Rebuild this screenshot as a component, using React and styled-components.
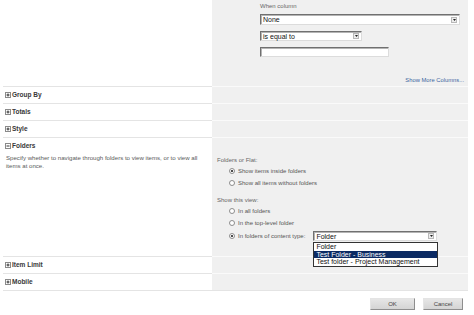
import React from 'react';
import styled, { createGlobalStyle } from 'styled-components';

const Global = createGlobalStyle`
  html, body { margin: 0; padding: 0; background: #fff; }
  body { font-family: "Liberation Sans", Arial, sans-serif; }
  * { box-sizing: border-box; }
`;

const Page = styled.div`
  width: 474px;
  height: 315px;
  overflow: hidden;
  padding: 0 6px 0 3px;
`;

const Table = styled.div`
  display: flex;
  flex-direction: column;
  border-bottom: 1px solid #e4e4e4;
`;

const Row = styled.div`
  display: grid;
  grid-template-columns: 209px 256px;
  height: ${p => p.$h}px;
`;

const LeftCell = styled.div`
  border-top: ${p => (p.$first ? 'none' : '1px solid #e4e4e4')};
  padding: 3px 4px 0 2px;
  display: flex;
  flex-direction: column;
`;

const RightCell = styled.div`
  background: #f0f0f0;
  border-top: ${p => (p.$first ? 'none' : '1px solid #fafafa')};
  display: flex;
  flex-direction: column;
  padding: ${p => p.$pad || '0'};
`;

const Header = styled.div`
  display: flex;
  align-items: center;
  gap: 1px;
  height: 9px;
  font-size: 6.5px;
  font-weight: bold;
  color: #383838;
  white-space: nowrap;
`;

const Desc = styled.div`
  margin-top: 4px;
  padding-left: 1px;
  font-size: 6.1px;
  line-height: 8px;
  color: #5a5a5a;
`;

const Label = styled.div`
  font-size: 6px;
  line-height: 9px;
  height: 9px;
  color: #666;
  white-space: nowrap;
`;

const MoreLink = styled.a`
  margin-top: auto;
  align-self: flex-end;
  font-size: 5.8px;
  line-height: 8px;
  color: #3b66a0;
  text-decoration: none;
  white-space: nowrap;
`;

const SelectWrap = styled.div`
  position: relative;
  margin-top: ${p => p.$mt || 0}px;
  margin-left: ${p => p.$ml || 0}px;
  width: ${p => p.$w}px;
  flex: none;
`;

const SelectBox = styled.div`
  width: 100%;
  height: ${p => p.$h || 11}px;
  background: #fff;
  border: 1px solid;
  border-color: #707070 #dcdcdc #dcdcdc #707070;
  box-shadow: inset 1px 1px 0 #b4b4b4;
  display: flex;
  align-items: center;
  justify-content: space-between;
  padding: 0 2px 0 2px;
  font-size: 7px;
  color: #111;
  white-space: nowrap;
`;

const DropBtn = styled.span`
  width: 6px;
  height: 6px;
  background: #ececec;
  border: 1px solid #b8b8b8;
  display: flex;
  align-items: center;
  justify-content: center;
`;

const TextInput = styled.div`
  margin-top: 6px;
  width: 129px;
  height: 10px;
  background: #fff;
  border: 1px solid;
  border-color: #707070 #dcdcdc #dcdcdc #707070;
  box-shadow: inset 1px 1px 0 #b4b4b4;
`;

const Popup = styled.div`
  position: absolute;
  top: calc(100% + 1px);
  left: 0;
  width: 125px;
  background: #fff;
  border: 1px solid #333;
  display: flex;
  flex-direction: column;
  z-index: 5;
`;

const PopItem = styled.div`
  height: 7.5px;
  line-height: 7.5px;
  padding-left: 2px;
  font-size: 7px;
  white-space: nowrap;
  background: ${p => (p.$active ? '#0b2a63' : '#fff')};
  color: ${p => (p.$active ? '#fff' : '#111')};
`;

const Group = styled.div`
  display: flex;
  flex-direction: column;
  margin-top: ${p => p.$mt || 0}px;
`;

const Option = styled.div`
  display: flex;
  align-items: center;
  gap: 3px;
  height: ${p => p.$h || 12}px;
  margin-left: 12px;
  font-size: 6px;
  color: #555;
  white-space: nowrap;
`;

const Buttons = styled.div`
  display: flex;
  justify-content: flex-end;
  gap: 8px;
  padding: 7px 5px 0 0;
`;

const Button = styled.button`
  width: ${p => p.$w}px;
  height: 12px;
  padding: 0;
  font-family: "Liberation Sans", Arial, sans-serif;
  font-size: 6px;
  color: #444;
  background: linear-gradient(#e6e6e6, #d4d4d4);
  border: 1px solid;
  border-color: #e4e4e4 #8e8e8e #8e8e8e #e4e4e4;
`;

const Arrow = () => (
  <svg width="3" height="2" viewBox="0 0 3 2">
    <path d="M0 0 H3 L1.5 2 Z" fill="#222" />
  </svg>
);

const Expander = ({ open }) => (
  <svg width="6" height="6" viewBox="0 0 6 6" style={{ flex: 'none' }}>
    <rect x="0.5" y="0.5" width="5" height="5" fill="#fff" stroke="#8a8a8a" />
    <path d="M1.5 3 H4.5" stroke="#333" strokeWidth="1" />
    {!open && <path d="M3 1.5 V4.5" stroke="#333" strokeWidth="1" />}
  </svg>
);

const RadioIcon = ({ checked }) => (
  <svg width="6" height="6" viewBox="0 0 6 6" style={{ flex: 'none' }}>
    <circle cx="3" cy="3" r="2.5" fill="#fff" stroke="#8c8c8c" />
    {checked && <circle cx="3" cy="3" r="1.1" fill="#222" />}
  </svg>
);

const Select = ({ w, h, mt, ml, value, children }) => (
  <SelectWrap $w={w} $mt={mt} $ml={ml}>
    <SelectBox $h={h}>
      <span>{value}</span>
      <DropBtn><Arrow /></DropBtn>
    </SelectBox>
    {children}
  </SelectWrap>
);

const Collapsed = ({ title }) => (
  <Row $h={17}>
    <LeftCell>
      <Header><Expander />{title}</Header>
    </LeftCell>
    <RightCell />
  </Row>
);

export default function App() {
  return (
    <Page>
      <Global />
      <Table>
        <Row $h={86}>
          <LeftCell $first />
          <RightCell $first $pad="2px 4px 2px 48px">
            <Label>When column</Label>
            <Select w={200} h={11} mt={3} value="None" />
            <Select w={102} h={10} mt={6} value="is equal to" />
            <TextInput />
            <MoreLink href="#">Show More Columns...</MoreLink>
          </RightCell>
        </Row>
        <Collapsed title="Group By" />
        <Collapsed title="Totals" />
        <Collapsed title="Style" />
        <Row $h={119}>
          <LeftCell>
            <Header><Expander open />Folders</Header>
            <Desc>
              Specify whether to navigate through folders to view items, or to view all items at once.
            </Desc>
          </LeftCell>
          <RightCell $pad="18px 0 0 5px">
            <Group>
              <Label>Folders or Flat:</Label>
              <Option><RadioIcon checked />Show items inside folders</Option>
              <Option><RadioIcon />Show all items without folders</Option>
            </Group>
            <Group $mt={7}>
              <Label>Show this view:</Label>
              <Option><RadioIcon />In all folders</Option>
              <Option><RadioIcon />In the top-level folder</Option>
              <Option $h={14}>
                <RadioIcon checked />In folders of content type:
                <Select w={124} h={10} ml={5} value="Folder">
                  <Popup>
                    <PopItem>Folder</PopItem>
                    <PopItem $active>Test Folder - Business</PopItem>
                    <PopItem>Test folder - Project Management</PopItem>
                  </Popup>
                </Select>
              </Option>
            </Group>
          </RightCell>
        </Row>
        <Collapsed title="Item Limit" />
        <Collapsed title="Mobile" />
      </Table>
      <Buttons>
        <Button $w={45}>OK</Button>
        <Button $w={40}>Cancel</Button>
      </Buttons>
    </Page>
  );
}
